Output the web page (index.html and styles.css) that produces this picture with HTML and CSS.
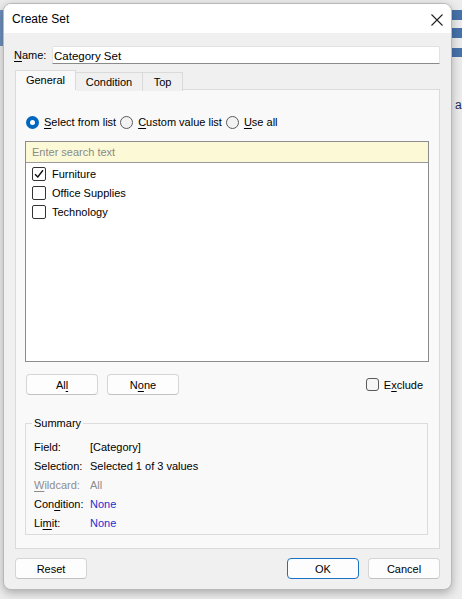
FILE: index.html
```html
<!DOCTYPE html>
<html>
<head>
  <link rel="stylesheet" href="styles.css">
</head>
<body>
  <div class="dialog">
    <div class="titlebar">
      <span class="title">Create Set</span>
      <svg class="close" width="12" height="12" viewBox="0 0 12 12">
        <path d="M0.5 0.5 L11.5 11.5 M11.5 0.5 L0.5 11.5" stroke="#222" stroke-width="1.1" fill="none"/>
      </svg>
    </div>

    <div class="content">
      <div class="name-row">
        <span class="label"><u>N</u>ame:</span>
        <div class="textbox">Category Set</div>
      </div>

      <div class="tabs">
        <div class="tab active">General</div>
        <div class="tab">Condition</div>
        <div class="tab">Top</div>
      </div>

      <div class="panel">
        <div class="radios">
          <span class="radio checked"></span><span><u>S</u>elect from list</span>
          <span class="radio"></span><span><u>C</u>ustom value list</span>
          <span class="radio"></span><span><u>U</u>se all</span>
        </div>

        <div class="listbox">
          <div class="search">Enter search text</div>
          <div class="items">
            <div class="item">
              <span class="check on">
                <svg width="12" height="12" viewBox="0 0 12 12"><path d="M2 6.2 L4.8 9 L10 2.2" stroke="#111" stroke-width="1.4" fill="none"/></svg>
              </span>
              Furniture
            </div>
            <div class="item"><span class="check"></span>Office Supplies</div>
            <div class="item"><span class="check"></span>Technology</div>
          </div>
        </div>

        <div class="actions">
          <button class="btn">Al<u>l</u></button>
          <button class="btn">N<u>o</u>ne</button>
          <span class="exclude"><span class="box"></span>E<u>x</u>clude</span>
        </div>

        <fieldset class="summary">
          <legend>Summary</legend>
          <div class="row"><span class="key">Field:</span><span>[Category]</span></div>
          <div class="row"><span class="key">Selection:</span><span>Selected 1 of 3 values</span></div>
          <div class="row dim"><span class="key"><u>W</u>ildcard:</span><span>All</span></div>
          <div class="row"><span class="key">Con<u>d</u>ition:</span><span class="link">None</span></div>
          <div class="row"><span class="key">Li<u>m</u>it:</span><span class="link">None</span></div>
        </fieldset>
      </div>

      <div class="footer">
        <button class="btn">Reset</button>
        <span class="spacer"></span>
        <button class="btn default">OK</button>
        <button class="btn">Cancel</button>
      </div>
    </div>
  </div>
  <span class="behind">a</span>
</body>
</html>
```

FILE: styles.css
```css
body {
  margin: 0;
  width: 462px;
  height: 599px;
  overflow: hidden;
  position: relative;
  font-family: "Segoe UI", "Liberation Sans", Arial, sans-serif;
  font-size: 11px;
  color: #000;
  background:
    linear-gradient(#4672aa, #4672aa) right 0 top 10px / 10px 10px no-repeat,
    linear-gradient(#4672aa, #4672aa) right 0 top 28px / 10px 10px no-repeat,
    linear-gradient(#4672aa, #4672aa) right 0 top 48px / 10px 9px no-repeat,
    linear-gradient(#6d8fbb, #6d8fbb) left 0 top 10px / 3px 36px no-repeat,
    #ececec;
}

/* lettre de la fenêtre derrière le dialogue */
.behind {
  position: absolute;
  left: 455px;
  top: 98px;
  font-size: 12px;
  color: #1d2a55;
  z-index: -1;
}

u {
  text-decoration: underline;
  text-underline-offset: 2px;
}

.dialog {
  margin: 3px 0 0 3px;
  width: 447px;
  height: 585px;
  border: 1px solid #b9b9b9;
  border-radius: 8px;
  background: #f0f0f0;
  box-shadow: 0 3px 10px rgba(0, 0, 0, 0.28);
  overflow: hidden;
  position: relative;
}

.titlebar {
  height: 29px;
  background: #ffffff;
  display: flex;
  align-items: center;
  padding: 0 8px 0 8px;
}

.title {
  font-size: 12px;
  flex: 1;
  padding-top: 1px;
}

.close {
  margin-top: 2px;
}

.content {
  padding: 12px 11px 0 11px;
}

.name-row {
  display: flex;
  align-items: center;
  height: 19px;
}

.name-row .label {
  width: 38px;
  margin-left: -1px;
}

.textbox {
  flex: 1;
  height: 18px;
  line-height: 18px;
  background: #ffffff;
  border: 1px solid #e2e2e2;
  border-bottom: 1px solid #8a8a8a;
  border-radius: 2px 2px 0 0;
  padding-left: 1px;
  box-sizing: border-box;
  font-size: 11.5px;
}

.tabs {
  display: flex;
  margin-top: 7px;
  height: 18px;
}

.tab {
  box-sizing: border-box;
  height: 19px;
  line-height: 18px;
  text-align: center;
  background: #f0f0f0;
  border: 1px solid #dadada;
  border-bottom: none;
  margin-top: 1px;
}

.tab:nth-child(1) { width: 61px; }
.tab:nth-child(2) { width: 67px; border-left: none; }
.tab:nth-child(3) { width: 40px; border-left: none; }

.tab.active {
  background: #f9f9f9;
  height: 20px;
  margin-top: -1px;
  position: relative;
  z-index: 1;
}

.panel {
  box-sizing: border-box;
  height: 460px;
  background: #f9f9f9;
  border: 1px solid #dadada;
  padding: 24px 10px 0 9px;
}

.radios {
  display: flex;
  align-items: center;
  height: 16px;
}

.radio {
  box-sizing: border-box;
  width: 13px;
  height: 13px;
  border-radius: 50%;
  border: 1px solid #5a5a5a;
  background: #f3f3f3;
  margin-right: 5px;
  margin-left: 4px;
}

.radio:first-child {
  margin-left: 1px;
}

.radio.checked {
  border: 4px solid #0067c0;
  background: #ffffff;
}

.listbox {
  margin-top: 11px;
  height: 221px;
  box-sizing: border-box;
  border: 1px solid #8c8c8c;
  background: #ffffff;
}

.search {
  height: 20px;
  line-height: 20px;
  background: #fcfad6;
  border-bottom: 1px solid #9a9a9a;
  color: #8a8a8a;
  padding-left: 6px;
}

.items {
  padding: 1px 0 0 6px;
}

.item {
  display: flex;
  align-items: center;
  height: 19px;
}

.check {
  box-sizing: border-box;
  width: 14px;
  height: 14px;
  border: 1px solid #333;
  border-radius: 2px;
  margin-right: 6px;
  display: flex;
  align-items: center;
  justify-content: center;
}

.actions {
  display: flex;
  align-items: center;
  margin-top: 12px;
  height: 21px;
}

.btn {
  box-sizing: border-box;
  width: 72px;
  height: 21px;
  font-family: inherit;
  font-size: 11px;
  color: #000;
  background: #fdfdfd;
  border: 1px solid #d5d5d5;
  border-bottom-color: #c2c2c2;
  border-radius: 4px;
  padding: 0;
  margin-right: 9px;
}

.actions .btn:first-child {
  margin-left: 1px;
}

.exclude {
  margin-left: auto;
  margin-right: 6px;
  display: flex;
  align-items: center;
}

.exclude .box {
  box-sizing: border-box;
  width: 13px;
  height: 13px;
  border: 1px solid #5a5a5a;
  border-radius: 3px;
  background: #f6f6f6;
  margin-right: 5px;
}

.summary {
  margin: 22px 1px 0 0;
  padding: 8px 0 0 8px;
  height: 118px;
  box-sizing: border-box;
  border: 1px solid #dcdcdc;
}

.summary legend {
  padding: 0 2px;
  margin-left: -2px;
}

.row {
  display: flex;
  align-items: center;
  height: 19px;
}

.row .key {
  width: 56px;
}

.row.dim {
  color: #8d8d8d;
}

.link {
  color: #1c2fd0;
}

.footer {
  display: flex;
  margin-top: 9px;
}

.footer .btn {
  margin-right: 0;
}

.spacer {
  flex: 1;
}

.footer .default {
  border: 1px solid #1a73c2;
  margin-right: 9px;
}
```
